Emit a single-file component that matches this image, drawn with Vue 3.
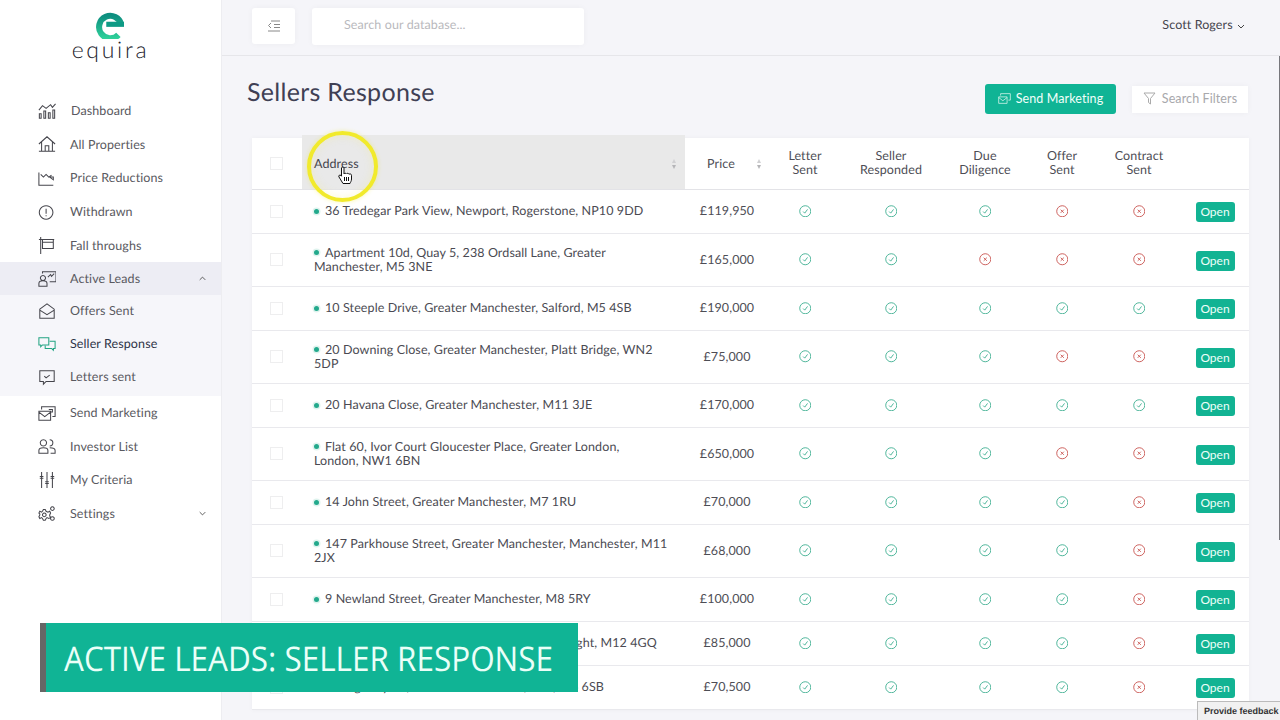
<script setup>
const nav = [
  { label: 'Dashboard', icon: 'dash', cls: 'indent' },
  { label: 'All Properties', icon: 'home' },
  { label: 'Price Reductions', icon: 'chart' },
  { label: 'Withdrawn', icon: 'alert' },
  { label: 'Fall throughs', icon: 'sign' }
]
const sub = [
  { label: 'Offers Sent', icon: 'mail' },
  { label: 'Seller Response', icon: 'chat', cls: 'active' },
  { label: 'Letters sent', icon: 'letter' }
]
const nav2 = [
  { label: 'Send Marketing', icon: 'send' },
  { label: 'Investor List', icon: 'people' },
  { label: 'My Criteria', icon: 'sliders' },
  { label: 'Settings', icon: 'gear', caret: true }
]
const paths = {
  dash: 'M1.500 18v-5h2v5zM6.500 18v-8h2v8zM11.500 18v-6h2v6zM16.500 18v-9h2v9zM1 9l4-5 4 3 5-4 2 3 3.500-4',
  home: 'M1 10l9-8 9 8M4 8v10h12V8M8 18v-6h4v6M1 18h18',
  chart: 'M1 4v14h16M3 6l3 3 3-3 3 3 3-2M13 9l4 3v-3h-3',
  alert: 'M9 3a7.500 7.500 0 1 0 .01 0M9 6.500v5.500M9 13.500v1.200',
  sign: 'M3 1v19M1 4h17M5 4v10h12V4M5 7h12',
  mail: 'M2 8l8-6 8 6v10H2zM2 9l8 5 8-5',
  chat: 'M1 3h11v8H5l-2 2v-2H1zM13 7h6v8h-2v2l-2-2H8v-3',
  letter: 'M2 3h16v12H9l-3 3v-3H2zM7 9l2 2 4-3',
  send: 'M1 8h13v10H1zM1 9l6.500 5L14 9M4 6V3h15v11h-3M12 6h4v3h-2',
  people: 'M1 18v-3c0-2 2-3 5-3s5 1 5 3v3zM6 3a3.500 3.500 0 1 0 .01 0M13 12c4 0 6 1 6 3v3h-5M13 3a3.500 3.500 0 1 1 0 7',
  sliders: 'M4 1v18M10 1v18M16 1v18M2 6h4M8 12h4M14 6h4M2 8h4M8 14h4M14 8h4',
  gear: 'M8 5l1 2 2 1 2-1 1 2-1 2v1l1 2-2 1-2-1-1 1-1 2H6l-1-2-1-1-2 1-1-2 1-2v-1L1 9l1-2 2 1 1-1 1-2zM7 9a2 2 0 1 0 .01 0M16 2a2 2 0 1 0 .01 0M16 13a2 2 0 1 0 .01 0'
}
const rows = [
  { a: '36 Tredegar Park View, Newport, Rogerstone, NP10 9DD', p: '£119,950', s: [1, 1, 1, 0, 0] },
  { a: 'Apartment 10d, Quay 5, 238 Ordsall Lane, Greater Manchester, M5 3NE', p: '£165,000', s: [1, 1, 0, 0, 0], tall: true },
  { a: '10 Steeple Drive, Greater Manchester, Salford, M5 4SB', p: '£190,000', s: [1, 1, 1, 1, 1] },
  { a: '20 Downing Close, Greater Manchester, Platt Bridge, WN2 5DP', p: '£75,000', s: [1, 1, 1, 0, 0], tall: true },
  { a: '20 Havana Close, Greater Manchester, M11 3JE', p: '£170,000', s: [1, 1, 1, 1, 1] },
  { a: 'Flat 60, Ivor Court Gloucester Place, Greater London, London,\u00a0NW1 6BN', p: '£650,000', s: [1, 1, 1, 0, 0], tall: true },
  { a: '14 John Street, Greater Manchester, M7 1RU', p: '£70,000', s: [1, 1, 1, 1, 0] },
  { a: '147 Parkhouse Street, Greater Manchester, Manchester, M11 2JX', p: '£68,000', s: [1, 1, 1, 1, 0], tall: true },
  { a: '9 Newland Street, Greater Manchester, M8 5RY', p: '£100,000', s: [1, 1, 1, 1, 0] },
  { a: '12 Langport Ave, Greater Manchester, Longsight, M12 4GQ', p: '£85,000', s: [1, 1, 1, 1, 0] },
  { a: '6 Kingsway Rd, Greater Manchester, Sale, M6 6SB', p: '£70,500', s: [1, 1, 1, 1, 0] }
]
</script>

<template>
  <div class="app">
    <aside class="side">
      <div class="logo">
        <svg class="mark" width="28" height="28" viewBox="0 0 30 30">
          <defs>
            <linearGradient id="lg" x1="0" y1="0" x2="0" y2="1">
              <stop offset="0" stop-color="#0e8f80" />
              <stop offset="1" stop-color="#2fd09a" />
            </linearGradient>
          </defs>
          <path d="M24 25.500A12 12 0 1 1 27 14.500" fill="none" stroke="url(#lg)" stroke-width="6.500" />
          <path d="M11 11.500h19v5.500H11z" fill="#0e9a85" />
        </svg>
        <div class="brand">equira</div>
      </div>
      <nav>
        <a v-for="n in nav" :key="n.label" class="item" :class="n.cls">
          <svg class="ic" viewBox="0 0 20 20"><path :d="paths[n.icon]" /></svg>
          <span>{{ n.label }}</span>
        </a>
        <a class="item open">
          <svg class="ic" viewBox="0 0 20 20"><path d="M1 18v-3c0-2 2-3 4.500-3S10 13 10 15v3zM5.500 6a2.800 2.800 0 1 0 .01 0M5 4V2h15v11h-7M11 8l3-3 1 2 3-3" /></svg>
          <span>Active Leads</span>
          <svg class="caret" viewBox="0 0 10 6"><path d="M1 5l4-4 4 4" /></svg>
        </a>
        <div class="subs">
          <a v-for="n in sub" :key="n.label" class="item sub" :class="n.cls">
            <svg class="ic" viewBox="0 0 20 20"><path :d="paths[n.icon]" /></svg>
            <span>{{ n.label }}</span>
          </a>
        </div>
        <a v-for="n in nav2" :key="n.label" class="item">
          <svg class="ic" viewBox="0 0 20 20"><path :d="paths[n.icon]" /></svg>
          <span>{{ n.label }}</span>
          <svg v-if="n.caret" class="caret" viewBox="0 0 10 6"><path d="M1 1l4 4 4-4" /></svg>
        </a>
      </nav>
    </aside>

    <main class="main">
      <header class="top">
        <button class="menu">
          <svg width="14" height="12" viewBox="0 0 14 12"><path d="M4 1h9M7 4.500h6M7 7.500h6M1 11h12M4 3L1.500 5.500 4 8" /></svg>
        </button>
        <div class="search">Search our database...</div>
        <div class="user">Scott Rogers
          <svg width="8" height="5" viewBox="0 0 8 5"><path d="M1 1l3 3 3-3" /></svg>
        </div>
      </header>

      <div class="head">
        <h1>Sellers Response</h1>
        <div class="actions">
          <button class="btn-send">
            <svg width="13" height="11" viewBox="0 0 20 17"><path d="M1 6h13v10H1zM1 7l6.500 5L14 7M4 4V1h15v10h-3" /></svg>
            Send Marketing
          </button>
          <button class="btn-filter">
            <svg width="13" height="13" viewBox="0 0 13 13"><path d="M1 1h11L7.500 6.500V12l-2-1.500v-4z" /></svg>
            Search Filters
          </button>
        </div>
      </div>

      <section class="table">
        <div class="row thead">
          <div class="cell"><span class="check"></span></div>
          <div class="cell addr-h">Address
            <span class="sort"><i class="up"></i><i class="down"></i></span>
          </div>
          <div class="cell price-h">Price
            <span class="sort"><i class="up"></i><i class="down"></i></span>
          </div>
          <div class="cell mid">Letter<br />Sent</div>
          <div class="cell mid">Seller<br />Responded</div>
          <div class="cell mid">Due<br />Diligence</div>
          <div class="cell mid">Offer<br />Sent</div>
          <div class="cell mid">Contract<br />Sent</div>
          <div class="cell"></div>
        </div>
        <div v-for="r in rows" :key="r.a" class="row body" :class="{ tall: r.tall }">
          <div class="cell"><span class="check"></span></div>
          <div class="cell addr"><div><i class="dot"></i>{{ r.a }}</div></div>
          <div class="cell mid">{{ r.p }}</div>
          <div v-for="(v, i) in r.s" :key="i" class="cell mid">
            <svg class="st" :class="v ? 'ok' : 'no'" viewBox="0 0 12 12">
              <circle cx="6" cy="6" r="5.300" />
              <path :d="v ? 'M4 6.300l1.500 1.500L8.200 4.200' : 'M4.500 4.500l3 3M7.500 4.500l-3 3'" />
            </svg>
          </div>
          <div class="cell mid"><button class="open-btn">Open</button></div>
        </div>
      </section>
    </main>

    <div class="scrollbar"></div>
    <div class="halo"></div>
    <svg class="cursor" width="15" height="18" viewBox="0 0 15 18">
      <path d="M3.500 2c0-1.300 2.500-1.300 2.500 0v6c.5-1 2-1 2.500 0 .5-1 2-1 2.500.3.600-.7 2.500-.5 2.500 1V13c0 2-1 3-1.500 4.500H5L1 11c-1-1.500.8-2.500 2-1.500l.5.700z" fill="#fff" stroke="#111" stroke-width="1" />
      <path d="M6.500 11v4M8.500 11v4M10.500 11v4" stroke="#111" fill="none" />
    </svg>
    <div class="banner"><span>ACTIVE LEADS: SELLER RESPONSE</span></div>
    <div class="feedback">Provide feedback</div>
  </div>
</template>

<style>
html, body { margin: 0; background: #f5f5f9; }
</style>

<style scoped>
.app { position: relative; display: flex; width: 1280px; height: 720px; overflow: hidden; background: #f5f5f9; font-family: Lato, "Open Sans", sans-serif; font-size: 12.500px; letter-spacing: .1px; color: #4d4d55; text-rendering: geometricPrecision; }
.side { flex: 0 0 222px; background: #fff; border-right: 1px solid #ededf1; box-sizing: border-box; height: 720px; }
.logo { height: 94px; box-sizing: border-box; padding-top: 11px; display: flex; flex-direction: column; align-items: center; }
.mark { margin-left: -2px; }
.brand { font-size: 23px; line-height: 20px; letter-spacing: 2.700px; color: #22222c; font-weight: 300; }
.item { display: flex; align-items: center; height: 33.600px; padding-left: 38px; padding-right: 15px; color: #595960; box-sizing: border-box; }
.item span { margin-left: 14px; }
.item.indent span { margin-left: 15px; }
.item.open { background: #ededf4; }
.subs { background: #f6f6fa; margin-top: -1px; padding-bottom: 3px; }
.sub { height: 32.800px; }
.active { color: #2d3346; }
.active .ic path { stroke: #23a483; }
.ic { width: 18px; height: 18px; flex: none; }
.ic path { fill: none; stroke: #45454c; stroke-width: 1.150; }
.caret { width: 7px; height: 5px; margin-left: auto; }
.caret path { fill: none; stroke: #444; stroke-width: 1.200; }
.main { flex: 1; min-width: 0; }
.top { height: 56px; box-sizing: border-box; border-bottom: 1px solid #e6e6ea; display: flex; align-items: flex-start; padding: 8px 35px 0 30px; }
.menu { width: 43px; height: 36px; background: #fff; border: 0; border-radius: 3px; box-shadow: 0 0 6px rgba(0,0,0,.04); display: flex; align-items: center; justify-content: center; padding: 0; }
.menu path { fill: none; stroke: #888; stroke-width: 1; }
.search { width: 272px; height: 37px; margin-left: 17px; background: #fff; border-radius: 3px; box-shadow: 0 0 6px rgba(0,0,0,.04); box-sizing: border-box; padding-left: 32px; line-height: 34px; color: #b9b9bd; }
.user { margin-left: auto; line-height: 34px; color: #44444c; }
.user svg { margin-left: 1px; }
.user path { fill: none; stroke: #444; }
.head { display: flex; justify-content: space-between; height: 82px; padding: 0 32px 0 25px; }
h1 { margin: 19px 0 0; font-size: 25px; font-weight: 400; line-height: 34px; letter-spacing: .3px; color: #3f4054; }
.actions { display: flex; gap: 16px; padding-top: 28px; }
.btn-send { width: 131px; height: 30px; border: 0; border-radius: 3px; background: #10b495; color: #f0fffa; font: inherit; letter-spacing: .1px; display: flex; align-items: center; justify-content: center; gap: 5px; padding: 0 0 2px; }
.btn-send path { fill: none; stroke: #d8f5ec; stroke-width: 1.200; }
.btn-filter { width: 116px; height: 27px; margin-top: 2px; border: 0; background: #fff; color: #a8a8ac; font: inherit; letter-spacing: .1px; display: flex; align-items: center; justify-content: center; gap: 6px; padding: 0 0 2px; box-shadow: 0 0 6px rgba(0,0,0,.04); }
.btn-filter path { fill: none; stroke: #aaa; }
.table { margin-left: 30px; width: 997px; background: #fff; box-shadow: 0 0 5px rgba(0,0,0,.04); }
.row { display: grid; grid-template-columns: 50px 383px 84px 72px 100px 88px 66px 88px 66px; height: 44px; box-sizing: border-box; border-bottom: 1px solid #e9e9ed; }
.row.tall { height: 53px; }
.thead { height: 52px; border-bottom-color: #e3e3e7; }
.thead .mid { padding-bottom: 2px; }
.cell { display: flex; align-items: center; min-width: 0; box-sizing: border-box; line-height: 14px; }
.cell:first-child { justify-content: center; }
.check { width: 11px; height: 11px; border: 1px solid #eeeeef; display: block; margin: -1px 0 0 -1px; }
.mid { justify-content: center; text-align: center; }
.body .mid, .body .addr { padding-bottom: 1px; }
.addr-h { background: #e9e9e9; margin-top: -3px; padding: 4px 9px 0 12px; justify-content: space-between; color: #44444c; }
.price-h { padding-left: 22px; gap: 22px; }
.sort { display: flex; flex-direction: column; gap: 2px; }
.sort i { display: block; width: 0; height: 0; border-left: 2.500px solid transparent; border-right: 2.500px solid transparent; }
.sort .up { border-bottom: 4px solid #d0d0d2; }
.sort .down { border-top: 4px solid #b5b5b8; }
.addr { padding-left: 12px; padding-right: 14px; color: #4a4a52; }
.dot { display: inline-block; width: 5px; height: 5px; border-radius: 50%; background: #23a98c; box-shadow: 0 0 0 1.500px #dff3ee; margin: 0 6px 1px 0; vertical-align: middle; }
.st { width: 12.500px; height: 12.500px; }
.st circle, .st path { fill: none; stroke-width: .9; }
.ok circle, .ok path { stroke: #45b295; }
.no circle, .no path { stroke: #cb5a56; }
.open-btn { width: 39px; height: 20px; margin: 2px 2px 0 0; border: 0; border-radius: 3px; background: #12b393; color: #effffa; font: inherit; font-size: 12px; padding: 0; }
.scrollbar { position: absolute; right: 0; top: 56px; width: 1px; height: 484px; background: #77777c; }
.halo { position: absolute; left: 307px; top: 131px; width: 63px; height: 63px; border: 4px solid #f1ea2c; border-radius: 50%; box-shadow: 0 0 4px rgba(241,234,44,.4), inset 0 0 8px rgba(250,240,100,.25); }
.cursor { position: absolute; left: 338px; top: 166px; }
.banner { position: absolute; left: 40px; top: 623px; width: 538px; height: 69px; box-sizing: border-box; background: #10b495; border-left: 6px solid #666; display: flex; align-items: center; padding-left: 18px; overflow: hidden; }
.banner span { font-family: "Open Sans", sans-serif; font-size: 34px; letter-spacing: 0; line-height: 1; white-space: nowrap; color: #eafff8; transform: scaleX(.925); transform-origin: left center; }
.feedback { position: absolute; right: 0; bottom: 0; width: 83px; height: 19px; background: #f1f1f1; border: 1px solid #bbb; border-right: 0; border-bottom: 0; box-sizing: border-box; font-family: "Liberation Sans", sans-serif; font-size: 9px; font-weight: 700; line-height: 18px; padding-left: 6px; letter-spacing: 0; color: #333; white-space: nowrap; overflow: hidden; }
</style>
